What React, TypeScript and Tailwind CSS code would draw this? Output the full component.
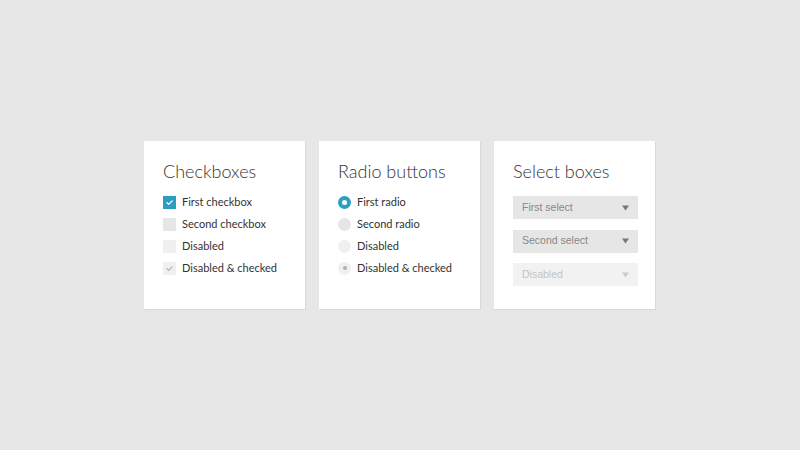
import React from "react";

const body = { fontFamily: "Lato, 'Noto Sans', sans-serif" };

function Check({ color }: { color: string }) {
  return (
    <svg width="9" height="9" viewBox="0 0 10 10" fill="none">
      <path d="M2.2 5.2 L4.2 7.1 L7.9 3.2" stroke={color} strokeWidth="1.4" strokeLinecap="round" strokeLinejoin="round" />
    </svg>
  );
}

function CheckRow({ state, label }: { state: "checked" | "unchecked" | "disabled" | "dchecked"; label: string }) {
  const box =
    state === "checked"
      ? "bg-[#2b9fc1]"
      : state === "unchecked"
      ? "bg-[#e6e6e6]"
      : "bg-[#f0f0f0]";
  return (
    <div className="flex h-[22px] items-center">
      <div className={`flex h-[13px] w-[13px] items-center justify-center ${box}`}>
        {state === "checked" && <Check color="#ffffff" />}
        {state === "dchecked" && <Check color="#b5b5b5" />}
      </div>
      <span className="ml-[6px] text-[11px] text-[#333333]" style={body}>
        {label}
      </span>
    </div>
  );
}

function RadioRow({ state, label }: { state: "checked" | "unchecked" | "disabled" | "dchecked"; label: string }) {
  const c =
    state === "checked"
      ? "bg-[#2b9fc1]"
      : state === "unchecked"
      ? "bg-[#e6e6e6]"
      : "bg-[#f0f0f0]";
  return (
    <div className="flex h-[22px] items-center">
      <div className={`flex h-[13px] w-[13px] items-center justify-center rounded-full ${c}`}>
        {state === "checked" && <div className="h-[5px] w-[5px] rounded-full bg-white" />}
        {state === "dchecked" && <div className="h-[4px] w-[4px] rounded-full bg-[#b0b0b0]" />}
      </div>
      <span className="ml-[6px] text-[11px] text-[#333333]" style={body}>
        {label}
      </span>
    </div>
  );
}

function SelectBox({ label, disabled }: { label: string; disabled?: boolean }) {
  return (
    <div
      className={`flex h-[23px] w-[125px] items-center justify-between pl-[9px] pr-[9px] ${
        disabled ? "bg-[#f2f2f2] text-[#c4c4c4]" : "bg-[#e6e6e6] text-[#888888]"
      }`}
      style={{ fontFamily: "'Liberation Sans', Arial, sans-serif" }}
    >
      <span className="text-[10.5px]">{label}</span>
      <svg width="7" height="6" viewBox="0 0 7 6">
        <path d="M0 0.5 L7 0.5 L3.5 5.5 Z" fill={disabled ? "#cccccc" : "#777777"} />
      </svg>
    </div>
  );
}

function Card({ title, children }: { title: string; children: React.ReactNode }) {
  return (
    <div className="h-[168px] w-[161px] bg-white px-[19px] pt-[18px] shadow-[1px_1px_1px_rgba(0,0,0,0.06)]">
      <div
        className="text-[18px] font-light leading-[24px] text-[#333333]"
        style={{ fontFamily: "Lato, 'Noto Sans', sans-serif" }}
      >
        {title}
      </div>
      {children}
    </div>
  );
}

export default function App() {
  return (
    <div className="flex h-screen w-full items-center justify-center gap-[14px] bg-[#e7e7e7] pr-[1px]">
      <Card title="Checkboxes">
        <div className="mt-[8px] flex flex-col">
          <CheckRow state="checked" label="First checkbox" />
          <CheckRow state="unchecked" label="Second checkbox" />
          <CheckRow state="disabled" label="Disabled" />
          <CheckRow state="dchecked" label="Disabled & checked" />
        </div>
      </Card>
      <Card title="Radio buttons">
        <div className="mt-[8px] flex flex-col">
          <RadioRow state="checked" label="First radio" />
          <RadioRow state="unchecked" label="Second radio" />
          <RadioRow state="disabled" label="Disabled" />
          <RadioRow state="dchecked" label="Disabled & checked" />
        </div>
      </Card>
      <Card title="Select boxes">
        <div className="mt-[13px] flex flex-col gap-[10.5px]">
          <SelectBox label="First select" />
          <SelectBox label="Second select" />
          <SelectBox label="Disabled" disabled />
        </div>
      </Card>
    </div>
  );
}
